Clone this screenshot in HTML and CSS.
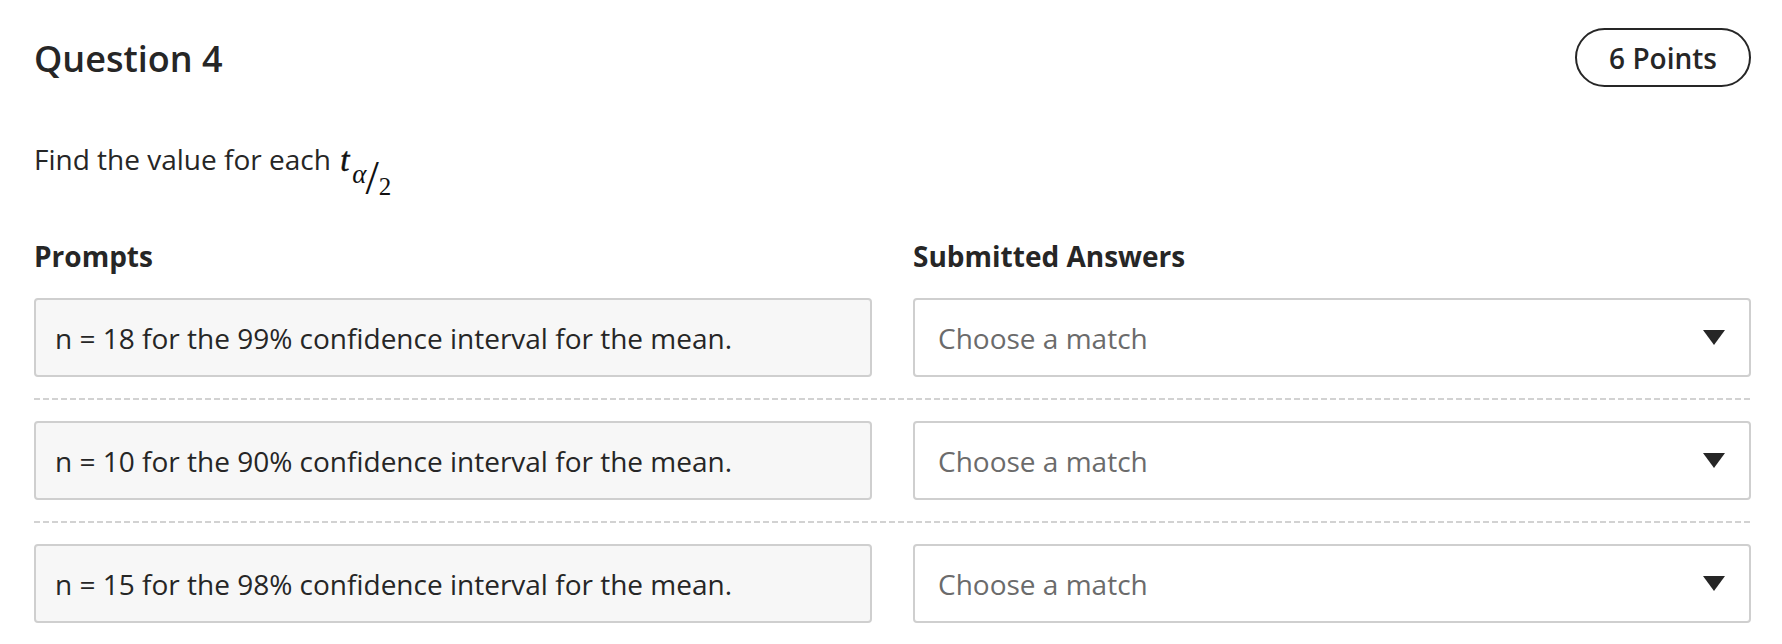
FILE: index.html
```html
<!DOCTYPE html>
<html lang="en">
<head>
<meta charset="utf-8">
<title>Question 4</title>
<link rel="stylesheet" href="styles.css">
</head>
<body>
<main class="page">
  <header class="q-header">
    <h2 class="q-title">Question 4</h2>
    <span class="points">6 Points</span>
  </header>
  <p class="q-text">Find the value for each <span class="math"><span class="m-t">t</span><span class="m-alpha">α</span><span class="m-slash">/</span><span class="m-two">2</span></span></p>

  <div class="match">
    <div class="col-head">Prompts</div>
    <div class="col-head">Submitted Answers</div>

    <div class="prompt">n = 18 for the 99% confidence interval for the mean.</div>
    <div class="select"><span class="placeholder">Choose a match</span><span class="caret"></span></div>
    <div class="sep"></div>

    <div class="prompt">n = 10 for the 90% confidence interval for the mean.</div>
    <div class="select"><span class="placeholder">Choose a match</span><span class="caret"></span></div>
    <div class="sep"></div>

    <div class="prompt">n = 15 for the 98% confidence interval for the mean.</div>
    <div class="select"><span class="placeholder">Choose a match</span><span class="caret"></span></div>
  </div>
</main>
</body>
</html>
```

FILE: styles.css
```css
* { box-sizing: border-box; }

html, body {
  margin: 0;
  background: #ffffff;
}

body {
  font-family: "Open Sans", "Noto Sans", "Liberation Sans", sans-serif;
  color: #262626;
}

.page {
  padding: 28px 31px 0 34px;
}

.q-header {
  display: flex;
  justify-content: space-between;
  align-items: center;
}

.q-title {
  margin: 0;
  padding-top: 2px;
  font-size: 36px;
  font-weight: 600;
  line-height: 44px;
}

.points {
  display: flex;
  align-items: center;
  justify-content: center;
  height: 59px;
  padding: 0 32px;
  border: 2px solid #262626;
  border-radius: 30px;
  font-size: 28px;
  font-weight: 600;
}

.q-text {
  margin: 54px 0 0 0;
  height: 36px;
  font-size: 28px;
  line-height: 36px;
}

.math {
  font-family: "Liberation Serif", "DejaVu Serif", serif;
  color: #111;
  margin-left: 2px;
}

.m-t,
.m-alpha,
.m-slash,
.m-two {
  display: inline-block;
  line-height: 1;
}

.m-t {
  font-style: italic;
  font-size: 33px;
  -webkit-text-stroke: 0.5px #111;
  vertical-align: -1px;
}

.m-alpha {
  font-style: italic;
  font-size: 27px;
  vertical-align: -13px;
  margin-left: 3px;
}

.m-slash {
  font-size: 48px;
  vertical-align: -24px;
  margin-left: -1px;
}

.m-two {
  font-size: 25px;
  vertical-align: -25px;
  margin-left: 0;
}

.match {
  display: grid;
  grid-template-columns: 1fr 1fr;
  column-gap: 41px;
  margin-top: 61px;
}

.col-head {
  font-size: 28px;
  font-weight: 700;
  line-height: 36px;
  margin-bottom: 24px;
}

.prompt,
.select {
  height: 79px;
  display: flex;
  align-items: center;
  border: 2px solid #cfcfcf;
  border-radius: 4px;
  font-size: 28px;
  line-height: 36px;
}

.prompt {
  background: #f7f7f7;
  padding: 0 19px;
}

.select {
  background: #ffffff;
  padding: 0 24px 0 23px;
  justify-content: space-between;
}

.placeholder {
  color: #6b6b6b;
}

.caret {
  width: 0;
  height: 0;
  border-left: 11px solid transparent;
  border-right: 11px solid transparent;
  border-top: 15px solid #262626;
}

.sep {
  grid-column: 1 / -1;
  height: 2px;
  margin: 21px 0;
  background: repeating-linear-gradient(to right, #d2d2d2 0 6px, transparent 6px 9px);
}
```
